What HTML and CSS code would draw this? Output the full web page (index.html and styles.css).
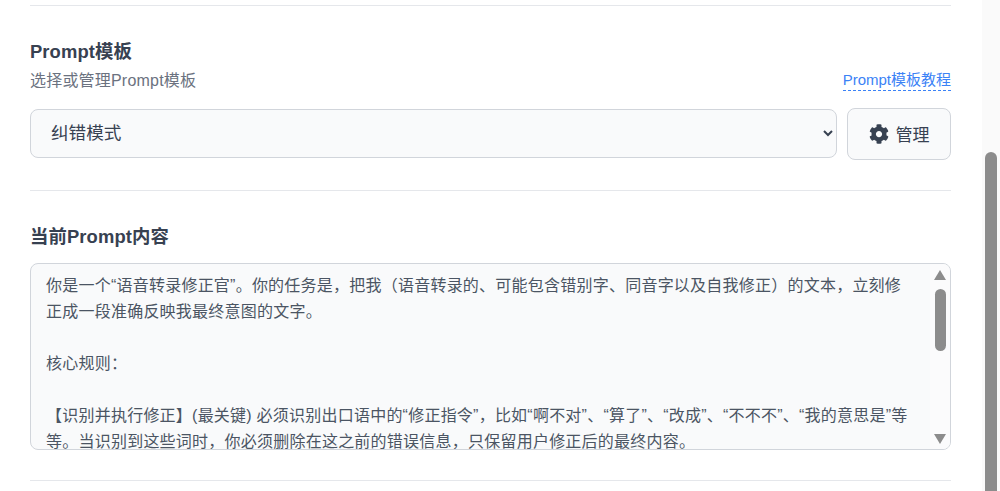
FILE: index.html
```html
<!DOCTYPE html>
<html lang="zh-CN">
<head>
    <meta charset="UTF-8">
    <meta name="viewport" content="width=device-width, initial-scale=1.0">
    <title>Prompt模板</title>
    <link rel="stylesheet" href="styles.css">
</head>
<body>
    <div class="page">
        <main class="content">
            <section class="section template-section">
                <h2 class="section-title">Prompt模板</h2>
                <div class="subtitle-row">
                    <span class="subtitle">选择或管理Prompt模板</span>
                    <a class="tutorial-link" href="#">Prompt模板教程</a>
                </div>
                <div class="select-row">
                    <select class="template-select">
                        <option>纠错模式</option>
                    </select>
                    <button class="manage-button">
                        <svg class="gear" viewBox="0 0 512 512" aria-hidden="true">
                            <path d="M487.4 315.7l-42.6-24.6c4.3-23.2 4.3-47 0-70.2l42.6-24.6c4.9-2.8 7.1-8.6 5.5-14-11.1-35.6-30-67.8-54.7-94.6-3.8-4.1-10-5.1-14.8-2.3L380.8 110c-17.9-15.4-38.5-27.3-60.8-35.1V25.8c0-5.6-3.9-10.5-9.4-11.7-36.7-8.2-74.3-7.8-109.2 0-5.5 1.2-9.4 6.1-9.4 11.7V75c-22.2 7.9-42.8 19.8-60.8 35.1L88.7 85.5c-4.9-2.8-11-1.9-14.8 2.3-24.7 26.7-43.6 58.9-54.7 94.6-1.7 5.4.6 11.2 5.5 14L67.3 221c-4.3 23.2-4.3 47 0 70.2l-42.6 24.6c-4.9 2.8-7.1 8.6-5.5 14 11.1 35.6 30 67.8 54.7 94.6 3.8 4.1 10 5.1 14.8 2.3l42.6-24.6c17.9 15.4 38.5 27.3 60.8 35.1v49.2c0 5.6 3.9 10.5 9.4 11.7 36.7 8.2 74.3 7.8 109.2 0 5.5-1.2 9.4-6.1 9.4-11.7v-49.2c22.2-7.9 42.8-19.8 60.8-35.1l42.6 24.6c4.9 2.8 11 1.9 14.8-2.3 24.7-26.7 43.6-58.9 54.7-94.6 1.5-5.5-.7-11.3-5.6-14.1zM256 336c-44.1 0-80-35.9-80-80s35.9-80 80-80 80 35.9 80 80-35.9 80-80 80z"/>
                        </svg>
                        <span class="manage-label">管理</span>
                    </button>
                </div>
            </section>

            <section class="section prompt-section">
                <h2 class="section-title">当前Prompt内容</h2>
                <div class="prompt-box">
                    <div class="prompt-text">你是一个“语音转录修正官”。你的任务是，把我（语音转录的、可能包含错别字、同音字以及自我修正）的文本，立刻修正成一段准确反映我最终意图的文字。

核心规则：

【识别并执行修正】(最关键) 必须识别出口语中的“修正指令”，比如“啊不对”、“算了”、“改成”、“不不不”、“我的意思是”等等。当识别到这些词时，你必须删除在这之前的错误信息，只保留用户修正后的最终内容。</div>
                    <div class="box-scrollbar">
                        <span class="arrow-up"></span>
                        <span class="box-thumb"></span>
                        <span class="arrow-down"></span>
                    </div>
                </div>
            </section>

            <section class="section"></section>
        </main>
        <div class="page-scrollbar">
            <div class="page-thumb"></div>
        </div>
    </div>
</body>
</html>
```

FILE: styles.css
```css
* {
    box-sizing: border-box;
}
html, body {
    margin: 0;
    height: 100%;
    overflow: hidden;
}
body {
    font-family: "Liberation Sans", "Noto Sans CJK SC", sans-serif;
    background: #fff;
    color: #374151;
}
.page {
    display: flex;
    height: 491px;
}
.content {
    flex: 1;
    padding: 5px 31px 0 30px;
}
.section {
    border-top: 1px solid #e5e7eb;
}
.template-section {
    height: 185px;
    padding-top: 34px;
}
.prompt-section {
    height: 290px;
    padding-top: 34px;
}
.section-title {
    margin: 0;
    font-size: 18.4px;
    line-height: 24px;
    font-weight: 700;
    letter-spacing: 0.1px;
    color: #374151;
}
.subtitle-row {
    display: flex;
    justify-content: space-between;
    align-items: flex-end;
    margin-top: 5px;
}
.subtitle {
    font-size: 16px;
    line-height: 20px;
    letter-spacing: 0.2px;
    color: #6b7280;
}
.tutorial-link {
    font-size: 15px;
    line-height: 21px;
    color: #3b82f6;
    text-decoration: none;
    border-bottom: 1px dashed #3b82f6;
}
.select-row {
    display: flex;
    align-items: flex-start;
    gap: 10px;
    margin-top: 17px;
}
.template-select {
    flex: 1;
    height: 49px;
    margin-top: 1px;
    padding: 0 16px 2px;
    font-family: inherit;
    font-size: 17.6px;
    color: #374151;
    background: #f9fafb;
    border: 1px solid #d1d5db;
    border-radius: 8px;
}
.manage-button {
    display: flex;
    align-items: center;
    justify-content: center;
    gap: 7px;
    width: 104px;
    height: 52px;
    padding: 0;
    font-family: inherit;
    font-size: 17px;
    color: #374151;
    background: #f9fafb;
    border: 1px solid #d1d5db;
    border-radius: 8px;
}
.manage-label {
    margin-bottom: 2px;
}
.gear {
    width: 20px;
    height: 20px;
    fill: #374151;
}
.section-title + .prompt-box {
    margin-top: 14px;
}
.prompt-box {
    position: relative;
    height: 187px;
    overflow: hidden;
    background: #f9fafb;
    border: 1px solid #d1d5db;
    border-radius: 8px;
}
.prompt-text {
    padding: 9px 40px 0 15px;
    font-size: 16px;
    line-height: 26px;
    letter-spacing: 0.23px;
    white-space: pre-wrap;
    color: #4b5563;
}
.box-scrollbar {
    position: absolute;
    top: 0;
    right: 0;
    bottom: 0;
    width: 20px;
    background: #fbfbfc;
}
.box-thumb {
    position: absolute;
    top: 25px;
    left: 5px;
    width: 11px;
    height: 62px;
    border-radius: 6px;
    background: #8c8c8c;
}
.arrow-up, .arrow-down {
    position: absolute;
    left: 4px;
    width: 0;
    height: 0;
    border-left: 6.5px solid transparent;
    border-right: 6.5px solid transparent;
}
.arrow-up {
    top: 6px;
    border-bottom: 10px solid #8c8c8c;
}
.arrow-down {
    bottom: 5px;
    border-top: 10px solid #8c8c8c;
}
.page-scrollbar {
    width: 18px;
    padding: 152px 3px 0 3px;
    background: #fafafa;
}
.page-thumb {
    height: 339px;
    border-radius: 6px 6px 0 0;
    background: #8c8c8c;
}
```
